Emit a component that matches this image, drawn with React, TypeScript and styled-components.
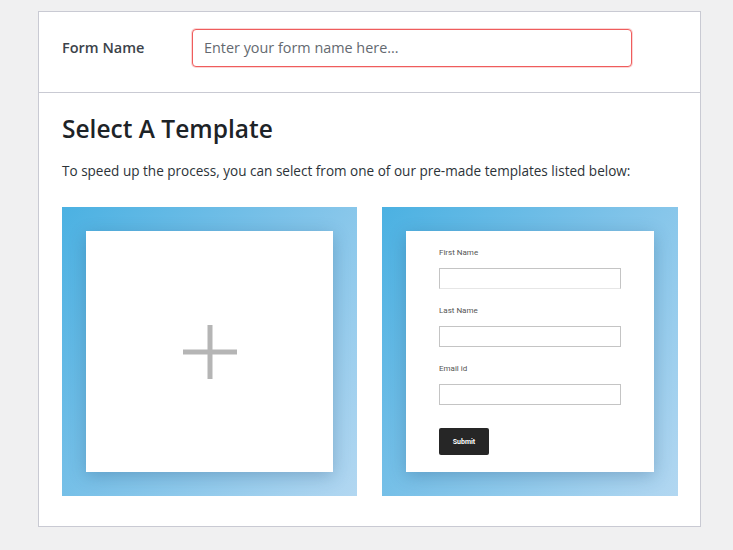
import React from "react";
import styled, { createGlobalStyle } from "styled-components";

const Global = createGlobalStyle`
  html, body { margin: 0; padding: 0; background: #f0f0f1; }
  body { font-family: "Open Sans", "Noto Sans", sans-serif; }
  * { box-sizing: border-box; }
`;

const Page = styled.div`
  padding: 11px 33px 24px 38px;
  width: 733px;
  min-height: 550px;
`;

const Panel = styled.div`
  width: 663px;
  background: #fff;
  border: 1px solid #c9cad3;
`;

const HeaderRow = styled.div`
  display: flex;
  align-items: center;
  height: 81px;
  padding: 0 23px 9px;
  border-bottom: 1px solid #c9cad3;
`;

const Label = styled.label`
  width: 130px;
  font-size: 14.5px;
  font-weight: 600;
  color: #3c434a;
`;

const NameInput = styled.input`
  width: 440px;
  height: 38px;
  border: 1px solid #ef5d5d;
  border-radius: 4px;
  box-shadow: 0 0 0 1px rgba(239, 93, 93, 0.25);
  padding: 0 11px;
  font-family: "Open Sans", sans-serif;
  font-size: 14.4px;
  color: #2c3338;
  outline: none;
  &::placeholder { color: #646970; }
`;

const Body = styled.div`
  padding: 19px 21px 30px 23px;
`;

const Title = styled.h2`
  margin: 0;
  font-size: 24.5px;
  font-weight: 600;
  line-height: 34px;
  color: #1d2327;
`;

const Lead = styled.p`
  margin: 15px 0 0;
  font-size: 13.55px;
  line-height: 20px;
  color: #2c3338;
`;

const Grid = styled.div`
  margin-top: 26px;
  display: grid;
  grid-template-columns: 295px 296px;
  column-gap: 25px;
`;

const Card = styled.div`
  height: 289px;
  padding: 24px;
  background: linear-gradient(125deg, #4bb1e2 0%, #7ac1e8 45%, #b2d7f1 100%);
  display: flex;
`;

const Sheet = styled.div`
  flex: 1;
  background: #fff;
  box-shadow: 0 4px 16px rgba(30, 70, 110, 0.28);
  display: flex;
  flex-direction: column;
`;

const BlankSheet = styled(Sheet)`
  align-items: center;
  justify-content: center;
`;

const FormSheet = styled(Sheet)`
  padding: 17px 0 0 33px;
  font-family: Roboto, "Noto Sans", sans-serif;
`;

const MiniLabel = styled.div`
  font-size: 8px;
  line-height: 10px;
  color: #555;
`;

const MiniInput = styled.div<{ $top?: boolean }>`
  margin-top: 10px;
  margin-bottom: 17px;
  width: 182px;
  height: 21px;
  border: 1px solid #c4c4c4;
  border-bottom-color: ${(p) => (p.$top ? "#e6e6e6" : "#c4c4c4")};
`;

const SubmitButton = styled.div`
  margin-top: 6px;
  width: 50px;
  height: 27px;
  background: #262626;
  border-radius: 2px;
  color: #fff;
  font-size: 7px;
  font-weight: 700;
  display: flex;
  align-items: center;
  justify-content: center;
`;

export default function App() {
  return (
    <>
      <Global />
      <Page>
        <Panel>
          <HeaderRow>
            <Label>Form Name</Label>
            <NameInput placeholder="Enter your form name here..." />
          </HeaderRow>
          <Body>
            <Title>Select A Template</Title>
            <Lead>
              To speed up the process, you can select from one of our pre-made templates listed below:
            </Lead>
            <Grid>
              <Card>
                <BlankSheet>
                  <svg width="56" height="56" viewBox="0 0 56 56">
                    <rect x="25.5" y="1" width="5" height="54" fill="#b5b5b5" />
                    <rect x="1" y="25.5" width="54" height="5" fill="#b5b5b5" />
                  </svg>
                </BlankSheet>
              </Card>
              <Card>
                <FormSheet>
                  <MiniLabel>First Name</MiniLabel>
                  <MiniInput $top />
                  <MiniLabel>Last Name</MiniLabel>
                  <MiniInput />
                  <MiniLabel>Email id</MiniLabel>
                  <MiniInput />
                  <SubmitButton>Submit</SubmitButton>
                </FormSheet>
              </Card>
            </Grid>
          </Body>
        </Panel>
      </Page>
    </>
  );
}
